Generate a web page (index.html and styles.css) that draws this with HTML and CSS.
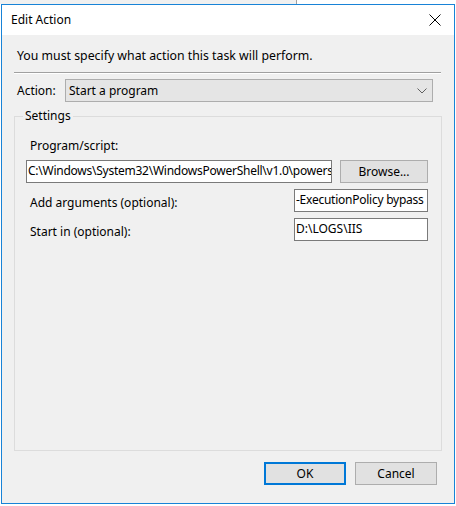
FILE: index.html
```html
<!DOCTYPE html>
<html>
<head>
<meta charset="utf-8">
<link rel="stylesheet" href="styles.css">
</head>
<body>
<div class="desktop">
  <div class="bg-strip"><div class="bg-left"></div><div class="bg-right"></div></div>
  <div class="window">
    <div class="titlebar">
      <span class="title">Edit Action</span>
      <span class="close"><svg width="12" height="12" viewBox="0 0 12 12"><path d="M0.5 0.5L11.5 11.5M11.5 0.5L0.5 11.5" stroke="#000" stroke-width="1"/></svg></span>
    </div>
    <div class="body">
      <div class="intro">You must specify what action this task will perform.</div>
      <div class="sep"></div>
      <div class="action-row">
        <span class="action-label">Action:</span>
        <div class="combo">
          <span>Start a program</span>
          <svg width="10" height="6" viewBox="0 0 10 6"><path d="M0.5 0.5L5 5L9.5 0.5" fill="none" stroke="#606060" stroke-width="1"/></svg>
        </div>
      </div>
      <fieldset class="settings">
        <legend>Settings</legend>
        <div class="prog-label">Program/script:</div>
        <div class="prog-row">
          <div class="input wide"><span class="val narrow">C:\Windows\System32\WindowsPowerShell\v1.0\powers</span></div>
          <div class="btn">Browse...</div>
        </div>
        <div class="field-row">
          <span class="field-label">Add arguments (optional):</span>
          <div class="input small"><span class="val narrow">-ExecutionPolicy bypass</span></div>
        </div>
        <div class="field-row">
          <span class="field-label">Start in (optional):</span>
          <div class="input small"><span class="val">D:\LOGS\IIS</span></div>
        </div>
      </fieldset>
      <div class="buttons">
        <div class="btn ok">OK</div>
        <div class="btn cancel">Cancel</div>
      </div>
    </div>
  </div>
</div>
</body>
</html>
```

FILE: styles.css
```css
* { box-sizing: border-box; }
html, body { margin: 0; padding: 0; }
body {
  width: 456px;
  height: 506px;
  overflow: hidden;
  background: #ffffff;
  font-family: "Noto Sans", "Open Sans", sans-serif;
  font-size: 12px;
  color: #000;
}
.desktop {
  position: relative;
  width: 456px;
  height: 506px;
}
.bg-strip {
  display: flex;
  height: 4px;
}
.bg-left {
  width: 297px;
  background: #f0f0f0;
  border-right: 1px solid #a0a0a0;
}
.bg-right { flex: 1; background: #fff; }
.window {
  margin-left: 1px;
  width: 454px;
  height: 500px;
  border: 1px solid #1883d7;
  background: #f0f0f0;
  display: flex;
  flex-direction: column;
}
.titlebar {
  height: 30px;
  background: #fff;
  display: flex;
  align-items: center;
  justify-content: space-between;
  padding: 0 10px 0 9px;
  flex-shrink: 0;
}
.title { font-size: 12px; line-height: 16px; }
.close { display: flex; width: 12px; height: 12px; margin-right: 3px; }
.body {
  flex: 1;
  padding: 0 12px 0 12px;
  display: flex;
  flex-direction: column;
}
.intro {
  margin-top: 13px;
  padding-left: 3px;
  line-height: 16px;
  font-size: 12.3px;
  color: #000;
}
.sep {
  margin-top: 8px;
  width: 427px;
  height: 2px;
  border-top: 1px solid #a0a0a0;
  border-bottom: 1px solid #ffffff;
}
.action-row {
  display: flex;
  align-items: center;
  margin-top: 5px;
  height: 23px;
}
.action-label { padding-left: 3px; width: 51px; }
.combo {
  width: 368px;
  height: 23px;
  background: #e5e5e5;
  border: 1px solid #adadad;
  display: flex;
  align-items: center;
  justify-content: space-between;
  padding: 0 5px 0 3px;
}
.settings {
  margin: 6px 0 0 0;
  width: 428px;
  height: 343px;
  border: 1px solid #dcdcdc;
  padding: 0 13px 0 11px;
}
.settings legend {
  padding: 0 2px;
  margin-left: -3px;
  line-height: 16px;
}
.prog-label { margin-top: 14px; padding-left: 4px; line-height: 16px; }
.prog-row {
  display: flex;
  align-items: center;
  margin-top: 6px;
  gap: 8px;
}
.input {
  height: 23px;
  background: #fff;
  border: 1px solid #7a7a7a;
  padding: 0 2px;
  line-height: 20px;
  white-space: nowrap;
  overflow: hidden;
}
.val.narrow { letter-spacing: -0.25px; }
.input.wide { width: 306px; padding: 0 1px; }
.input.small { width: 134px; padding: 0 1px; }
.btn {
  height: 23px;
  background: #e1e1e1;
  border: 1px solid #adadad;
  display: flex;
  align-items: center;
  justify-content: center;
}
.prog-row .btn { width: 88px; }
.field-row {
  display: flex;
  align-items: center;
  justify-content: space-between;
  margin-top: 6px;
}
.field-label { padding-left: 4px; padding-top: 3px; }
.buttons {
  display: flex;
  justify-content: flex-end;
  gap: 9px;
  margin-top: 11px;
  padding-right: 5px;
}
.buttons .btn { width: 82px; }
.btn.ok { border: 2px solid #0078d7; }
```
